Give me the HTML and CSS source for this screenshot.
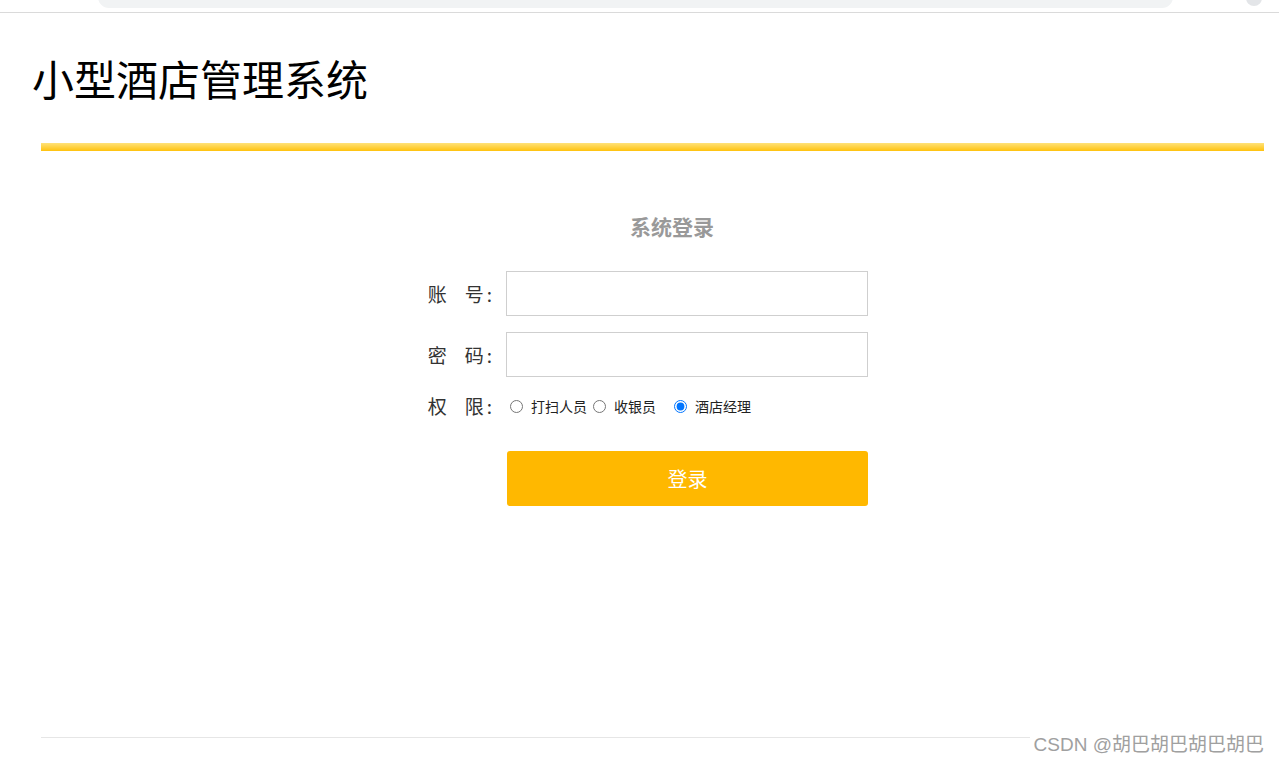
FILE: index.html
```html
<!DOCTYPE html>
<html lang="zh">
<head>
<meta charset="utf-8">
<title>小型酒店管理系统</title>
<link rel="stylesheet" href="styles.css">
</head>
<body>
<div class="chrome"><div class="addr"></div><div class="avatar"></div></div>
<header class="header">
  <h1 class="title">小型酒店管理系统</h1>
  <div class="bar"></div>
</header>
<main class="main">
  <form class="login">
    <h2 class="login-title">系统登录</h2>
    <div class="row">
      <label class="lbl">账<span class="sp"></span>号<span class="colon">:</span></label>
      <input class="field" type="text">
    </div>
    <div class="row">
      <label class="lbl">密<span class="sp"></span>码<span class="colon">:</span></label>
      <input class="field" type="password">
    </div>
    <div class="row row-radio">
      <label class="lbl">权<span class="sp"></span>限<span class="colon">:</span></label>
      <div class="radios">
        <label class="opt"><input type="radio" name="role">打扫人员</label>
        <label class="opt"><input type="radio" name="role">收银员</label>
        <label class="opt opt-wide"><input type="radio" name="role" checked>酒店经理</label>
      </div>
    </div>
    <div class="row row-btn">
      <span class="lbl"></span>
      <button class="btn" type="button">登录</button>
    </div>
  </form>
</main>
<footer class="footer">
  <div class="wm">CSDN @胡巴胡巴胡巴胡巴</div>
</footer>
</body>
</html>
```
FILE: styles.css
```css
html, body { margin: 0; padding: 0; background: #fff; }
body {
  font-family: "Microsoft YaHei", "Noto Sans CJK SC", "Noto Sans", sans-serif;
  color: #333;
  width: 1279px;
  height: 764px;
  overflow: hidden;
  position: relative;
}
.chrome {
  height: 12px;
  border-bottom: 1px solid #dadada;
  position: relative;
  overflow: hidden;
}
.addr {
  position: absolute;
  left: 98px; top: -14px;
  width: 1075px; height: 22px;
  background: #f1f3f4;
  border-radius: 11px;
}
.avatar {
  position: absolute;
  left: 1246px; top: -10px;
  width: 16px; height: 16px;
  border-radius: 50%;
  background: #e3e5e8;
}
.header { padding: 0; }
.title {
  margin: 0;
  padding: 37px 0 0 32px;
  height: 93px;
  box-sizing: border-box;
  font-size: 42px;
  line-height: 56px;
  font-weight: normal;
  color: #000;
  font-family: "Microsoft YaHei", "Noto Sans CJK SC", sans-serif;
}
.bar {
  margin: 37px 0 0 41px;
  width: 1223px;
  height: 8px;
  background: linear-gradient(to bottom, #ffe27a, #ffc20e);
}
.main { padding-top: 60px; }
.login { width: 448px; margin-left: 420px; }
.login-title {
  margin: 0 0 30px 0;
  padding-left: 168px;
  width: 168px;
  text-align: center;
  font-size: 21px;
  line-height: 30px;
  font-weight: bold;
  color: #999;
}
.row {
  display: flex;
  align-items: center;
  margin-bottom: 16px;
}
.lbl {
  width: 72px;
  flex: none;
  text-align: right;
  padding-right: 14px;
  font-size: 19px;
  color: #333;
  display: flex;
  justify-content: flex-end;
  align-items: center;
}
.sp { display: inline-block; width: 18px; }
.colon { margin-left: 3px; }
.field {
  width: 362px;
  height: 45px;
  box-sizing: border-box;
  border: 1px solid #cfcfcf;
  margin: 0;
  padding: 0 8px;
  outline: none;
}
.row-radio { height: 30px; margin-top: -3px; margin-bottom: 31px; }
.radios {
  display: flex;
  align-items: center;
  font-size: 14px;
  color: #222;
  padding-top: 2px;
}
.opt { display: flex; align-items: center; margin-right: 2px; }
.opt input { width: 13px; height: 13px; margin: 0 8px 0 4px; }
.opt-wide { margin-left: 16px; }
.opt-wide input { margin-left: 0; margin-right: 8px; }
.row-btn { margin-bottom: 0; }
.row-btn .lbl { padding-right: 15px; }
.btn {
  width: 362px;
  height: 55px;
  border: none;
  border-radius: 3px;
  background: #ffb800;
  color: #fff;
  font-size: 20px;
  font-family: inherit;
  margin: 0;
}
.footer {
  position: absolute;
  left: 41px; top: 737px;
  width: 1223px;
  border-top: 1px solid #e6e6e6;
}
.wm {
  position: absolute;
  right: 0; top: -5px;
  font-size: 19px;
  line-height: 24px;
  color: #a0a0a0;
  font-family: "Liberation Sans", "Noto Sans CJK SC", sans-serif;
  background: #fff;
  padding-left: 4px;
}
```
